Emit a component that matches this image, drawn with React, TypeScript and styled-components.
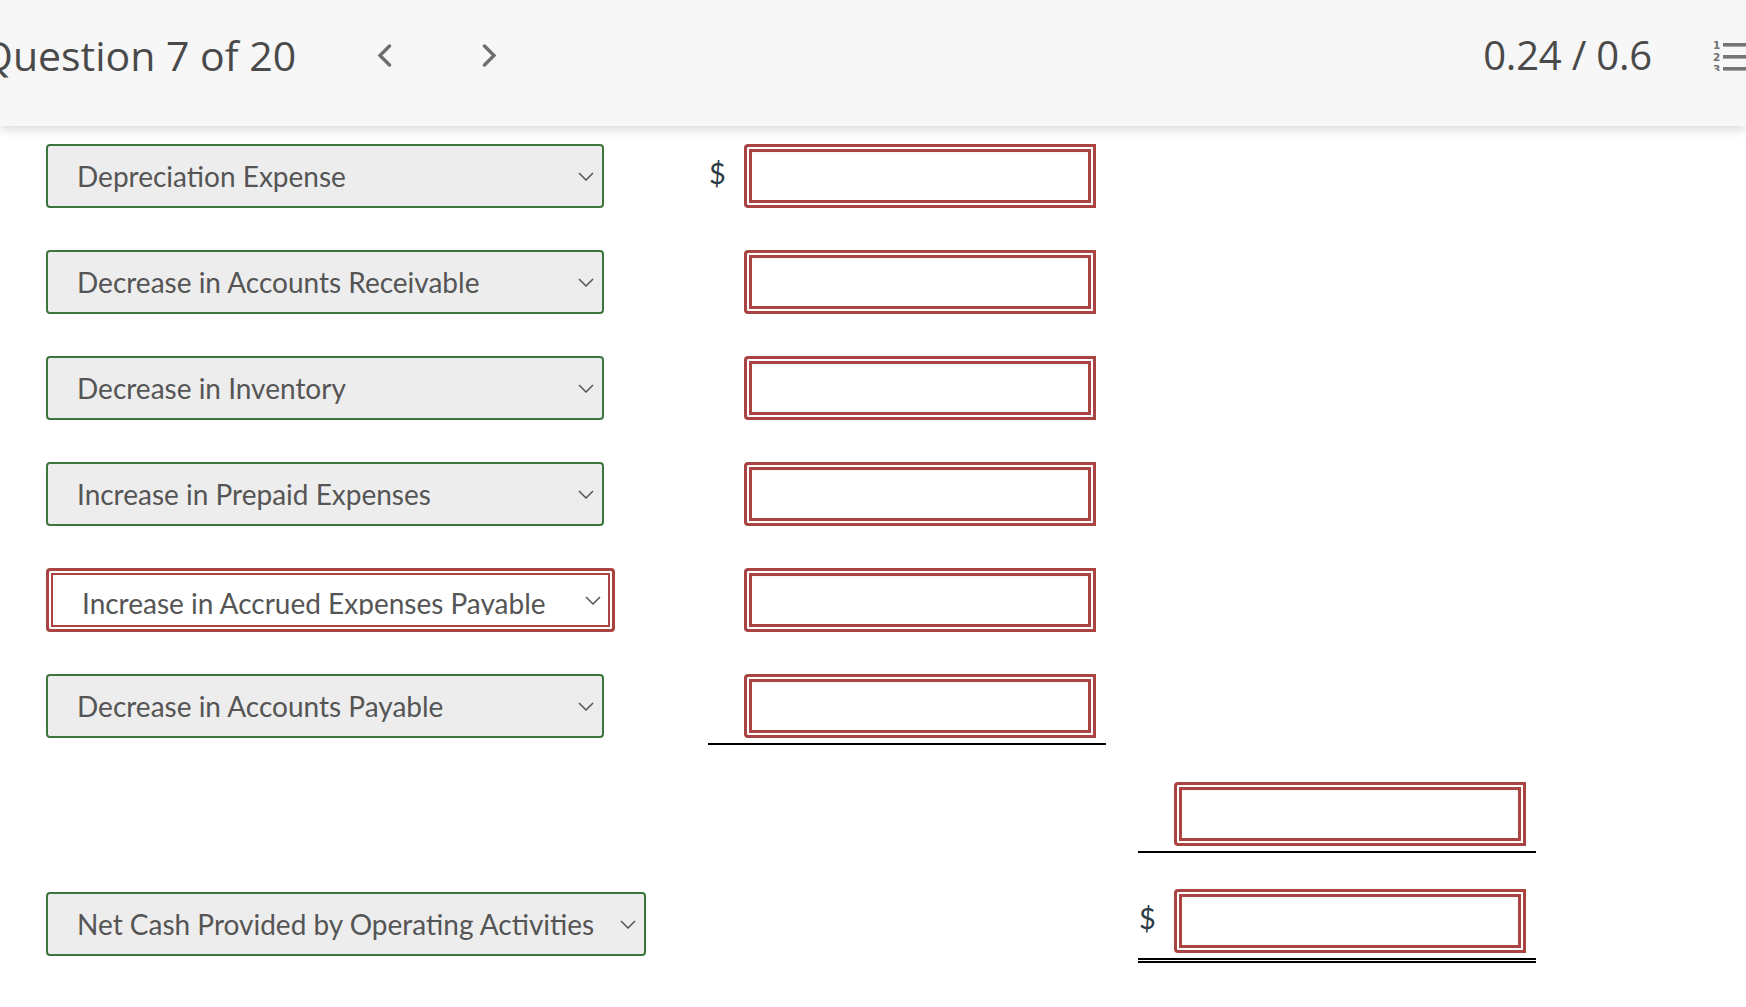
import React, { FC } from 'react'
import styled, { createGlobalStyle, css } from 'styled-components'

type Line = {
  id: string
  label: string
  width: number
  invalid?: boolean
  dollar?: boolean
  rule?: 'single' | 'double'
}

const LINES: Line[] = [
  { id: 'dep', label: 'Depreciation Expense', width: 558, dollar: true },
  { id: 'ar', label: 'Decrease in Accounts Receivable', width: 558 },
  { id: 'inv', label: 'Decrease in Inventory', width: 558 },
  { id: 'pre', label: 'Increase in Prepaid Expenses', width: 558 },
  { id: 'acc', label: 'Increase in Accrued Expenses Payable', width: 569, invalid: true },
  { id: 'ap', label: 'Decrease in Accounts Payable', width: 558, rule: 'single' },
]

const GlobalStyle = createGlobalStyle`
  html, body {
    margin: 0;
    padding: 0;
    background: #fff;
  }
  body {
    width: 1746px;
    height: 1007px;
    overflow: hidden;
    font-family: Lato, 'Open Sans', sans-serif;
  }
  * {
    box-sizing: border-box;
  }
`

// header bar
const Header = styled.header`
  position: relative;
  z-index: 1;
  height: 126px;
  padding-bottom: 16px;
  display: flex;
  align-items: center;
  background: #f7f7f7;
  box-shadow: 0 3px 10px rgba(0, 0, 0, 0.16);
`
const Title = styled.h1`
  margin: 0 0 0 -19px;
  font: 400 41px/1 'Open Sans', sans-serif;
  color: #4a4a4a;
  white-space: nowrap;
`
const NavGroup = styled.div`
  display: flex;
  gap: 90px;
  margin-left: 81px;
`
const NavButton = styled.button`
  display: flex;
  width: 15px;
  height: 23px;
  padding: 0;
  border: 0;
  background: none;
  cursor: pointer;
`
const Score = styled.div`
  margin-left: auto;
  font: 400 40px/1 'Open Sans', sans-serif;
  letter-spacing: -0.2px;
  color: #4a4a4a;
  white-space: nowrap;
`
const ListButton = styled.button`
  display: flex;
  width: 41px;
  height: 31px;
  margin: 0 -8px 0 61px;
  padding: 0;
  border: 0;
  background: none;
  flex-shrink: 0;
`

// form body
const Form = styled.main`
  display: flex;
  flex-direction: column;
  padding: 18px 0 0 46px;
`
const Row = styled.div<{ $mb?: number }>`
  display: grid;
  grid-template-columns: 662px 398px 32px 398px;
  align-items: start;
  margin-bottom: ${(p) => p.$mb ?? 42}px;
`
const SelectBox = styled.div<{ $w: number; $invalid?: boolean; $shift?: number }>`
  grid-column: 1;
  width: ${(p) => p.$w}px;
  height: 64px;
  margin-top: ${(p) => p.$shift ?? 0}px;
  display: flex;
  align-items: center;
  justify-content: space-between;
  padding: 0 8px 0 29px;
  border: 2px solid #3c763d;
  border-radius: 4px;
  background: #ededed;
  color: #555;
  font: 400 28px/34px Lato, sans-serif;
  cursor: pointer;
  ${(p) =>
    p.$invalid &&
    css`
      align-items: flex-start;
      padding: 0 11px 0 33px;
      border: 3px solid #a94442;
      background: #fff;
      box-shadow: inset 0 0 0 2px #fff, inset 0 0 0 4px #a94442;
    `}
`
// the invalid select shows its text cut at the bottom
const Label = styled.span<{ $clip?: boolean }>`
  white-space: nowrap;
  ${(p) =>
    p.$clip &&
    css`
      display: block;
      height: 29px;
      margin-top: 15px;
      overflow: hidden;
    `}
`
const Caret = styled.svg`
  align-self: center;
  flex-shrink: 0;
`
const AmountCell = styled.div<{ $col: number; $rule?: 'single' | 'double' }>`
  grid-column: ${(p) => p.$col};
  display: flex;
  align-items: flex-start;
  padding-right: 10px;
  ${(p) =>
    p.$rule === 'single' &&
    css`
      padding-bottom: 5px;
      border-bottom: 2px solid #000;
    `}
  ${(p) =>
    p.$rule === 'double' &&
    css`
      padding-bottom: 5px;
      border-bottom: 5px double #000;
    `}
`
const Dollar = styled.span`
  width: 36px;
  height: 58px;
  padding-left: 1px;
  font: 400 29px/58px Lato, sans-serif;
  color: #2d3b45;
`
const AmountInput = styled.input`
  width: 352px;
  height: 64px;
  padding: 0 14px;
  border: 3px solid #a94442;
  border-radius: 4px 0 0 4px;
  background: #fff;
  box-shadow: inset 0 0 0 2px #fff, inset 0 0 0 5px #a94442,
    inset 0 8px 4px -2px rgba(0, 0, 0, 0.05);
  font: 400 24px Lato, sans-serif;
  color: #333;
  outline: none;
`

const ChevronIcon: FC<{ dir: 'left' | 'right' }> = ({ dir }) => (
  <svg width='15' height='23' viewBox='0 0 15 23'>
    <path
      d={dir === 'left' ? 'M12.5 2 L3 11.5 L12.5 21' : 'M2.5 2 L12 11.5 L2.5 21'}
      fill='none'
      stroke='#6e6e6e'
      strokeWidth='3.4'
      strokeLinecap='round'
      strokeLinejoin='miter'
    />
  </svg>
)

const NumberedListIcon: FC = () => (
  <svg width='41' height='31' viewBox='0 0 41 31'>
    {[0, 1, 2].map((i) => (
      <g key={i}>
        <text
          x='0'
          y={8.5 + i * 12}
          fontSize='10.5'
          fontWeight='700'
          fontFamily="'DejaVu Sans', sans-serif"
          fill='#707070'
        >
          {i + 1}
        </text>
        <rect x='10' y={3 + i * 12} width='31' height='3.6' fill='#757575' />
      </g>
    ))}
  </svg>
)

const SelectCaret: FC = () => (
  <Caret width='16' height='9' viewBox='0 0 16 9'>
    <polyline points='1,1 8,8 15,1' fill='none' stroke='#555' strokeWidth='1.5' />
  </Caret>
)

const Dropdown: FC<{ label: string; width: number; invalid?: boolean; shift?: number }> = ({
  label,
  width,
  invalid,
  shift,
}) => (
  <SelectBox $w={width} $invalid={invalid} $shift={shift}>
    <Label $clip={invalid}>{label}</Label>
    <SelectCaret />
  </SelectBox>
)

const Amount: FC<{ col: number; dollar?: boolean; rule?: 'single' | 'double' }> = ({
  col,
  dollar,
  rule,
}) => (
  <AmountCell $col={col} $rule={rule}>
    <Dollar>{dollar ? '$' : ''}</Dollar>
    <AmountInput type='text' aria-label='amount' />
  </AmountCell>
)

const App: FC = () => {
  return (
    <>
      <GlobalStyle />
      <Header>
        <Title>Question 7 of 20</Title>
        <NavGroup>
          <NavButton aria-label='previous'>
            <ChevronIcon dir='left' />
          </NavButton>
          <NavButton aria-label='next'>
            <ChevronIcon dir='right' />
          </NavButton>
        </NavGroup>
        <Score>0.24 / 0.6</Score>
        <ListButton aria-label='question list'>
          <NumberedListIcon />
        </ListButton>
      </Header>
      <Form>
        {LINES.map((line, i) => (
          <Row key={line.id} $mb={i === LINES.length - 1 ? 37 : 42}>
            <Dropdown label={line.label} width={line.width} invalid={line.invalid} />
            <Amount col={2} dollar={line.dollar} rule={line.rule} />
          </Row>
        ))}
        <Row $mb={36}>
          <Amount col={4} rule='single' />
        </Row>
        <Row>
          <Dropdown label='Net Cash Provided by Operating Activities' width={600} shift={3} />
          <Amount col={4} dollar rule='double' />
        </Row>
      </Form>
    </>
  )
}

export default App
